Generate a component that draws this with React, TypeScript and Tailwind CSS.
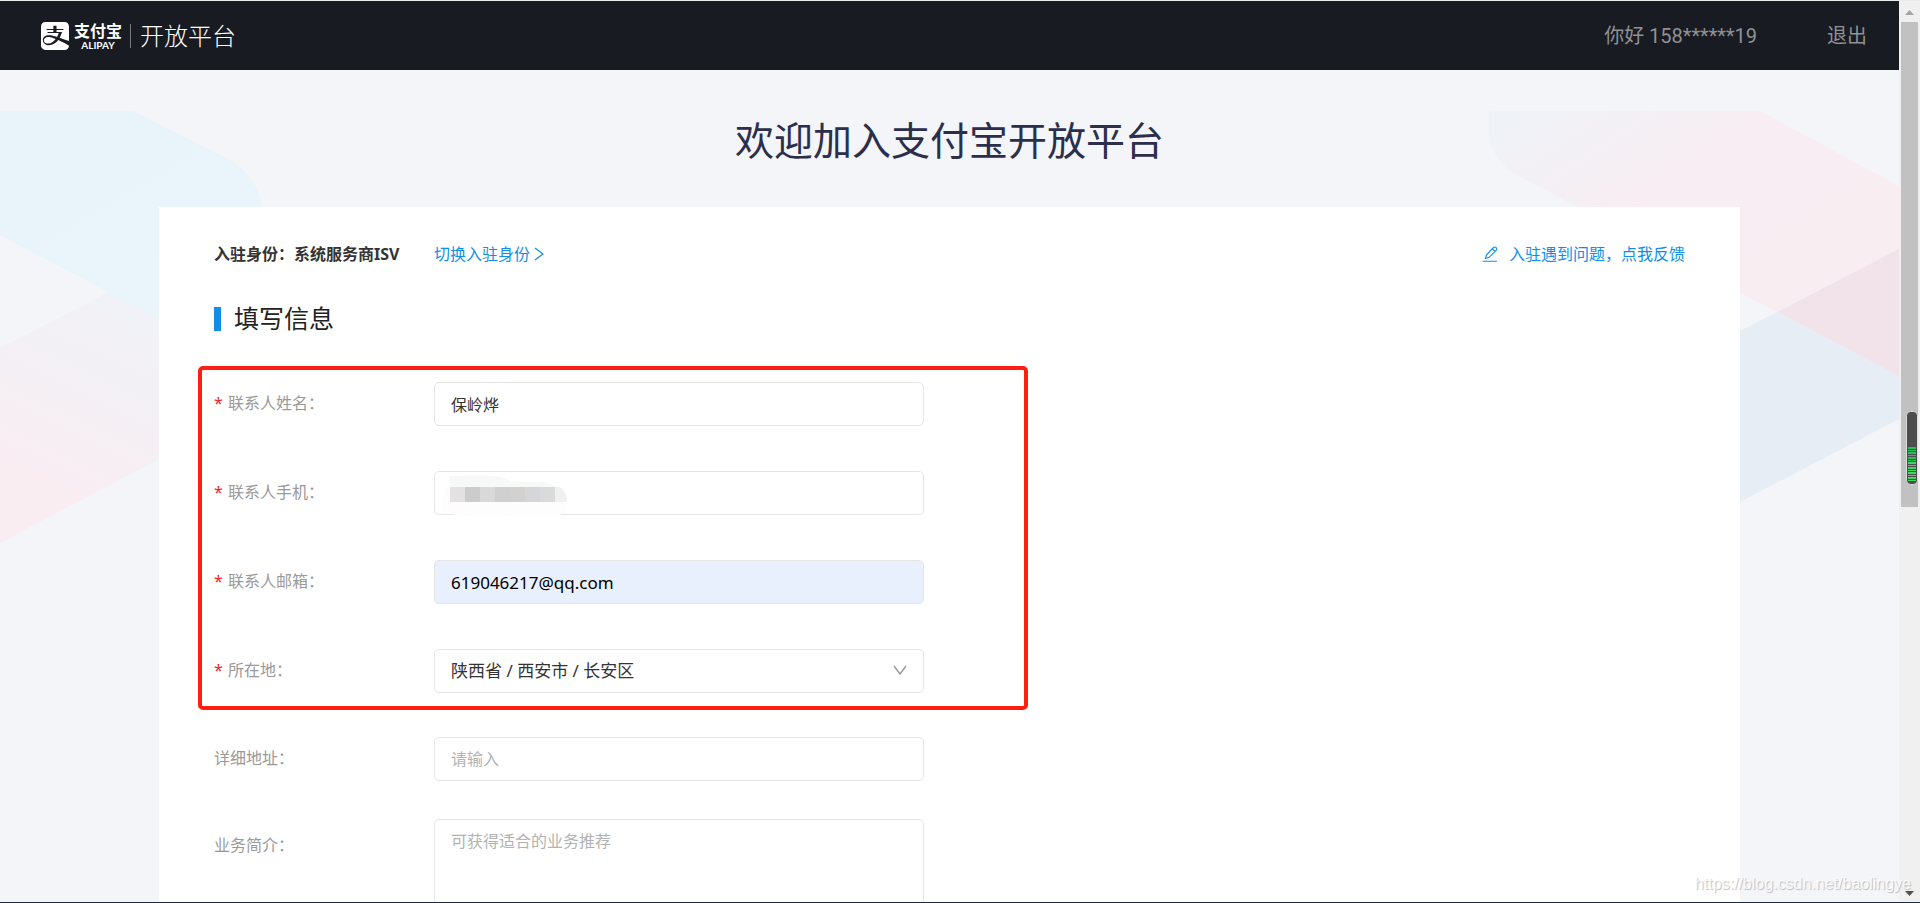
import React, { useState } from 'react';
import { FaAlipay } from 'react-icons/fa';

type FieldRowProps = {
    id: string;
    label: string;
    required?: boolean;
    children: React.ReactNode;
};

const boxClass = 'h-11 w-full rounded-[5px] border border-[#e5e5e5] px-4 focus:border-[#108ee9] focus:outline-none';

const FieldRow = ({ id, label, required, children }: FieldRowProps) => (
    <div className="flex items-start">
        <label htmlFor={id} className="flex h-[42px] w-[220px] shrink-0 items-center text-[#999]">
            {required && <span className="w-[14px] text-[#f5222d]">*</span>}
            {label}：
        </label>
        <div className="relative w-[490px]">{children}</div>
    </div>
);

const LeftShapes = () => (
    <svg className="absolute left-0 top-[110px]" width="280" height="440" viewBox="0 0 280 440" aria-hidden="true">
        <defs>
            <linearGradient id="leftPink" x1="0.7" y1="0" x2="0.4" y2="1">
                <stop offset="0" stopColor="#f0f2f7" />
                <stop offset="0.5" stopColor="#f5eff4" />
                <stop offset="0.8" stopColor="#f9edf2" />
            </linearGradient>
            <linearGradient id="leftBlue" x1="0" y1="0" x2="0.6" y2="1">
                <stop offset="0" stopColor="#e9f3fa" />
                <stop offset="1" stopColor="#e9f5fb" />
            </linearGradient>
        </defs>
        <path d="M0 237 L113 179 L159 205 V348 L0 432 Z" fill="url(#leftPink)" />
        <path d="M0 0 H133 L232 50 Q258 66 262 97 V257 H172 L159 208 L0 124 Z" fill="url(#leftBlue)" />
    </svg>
);

const RightShapes = () => (
    <svg className="absolute right-0 top-[110px]" width="410" height="400" viewBox="0 0 410 400" aria-hidden="true">
        <defs>
            <linearGradient id="rightPink" x1="0" y1="0" x2="0.6" y2="0.6">
                <stop offset="0" stopColor="#eef3f8" />
                <stop offset="0.6" stopColor="#f8edf2" />
                <stop offset="1" stopColor="#f8eef2" />
            </linearGradient>
        </defs>
        <path d="M0 0 H271 L410 75 V265 L90 97 L26 63 Q0 46 0 20 Z" fill="url(#rightPink)" />
        <path d="M410 138 L251 220 V391 L410 308 Z" fill="#e7edf5" />
        <path d="M410 138 L289 201 L410 265 Z" fill="#f2e3ea" />
    </svg>
);

// Che số điện thoại
const PhoneMask = () => (
    <svg className="absolute left-[4px] top-[2px]" width="132" height="46" viewBox="0 0 132 46" aria-hidden="true">
        <path d="M12 4 Q50 -2 73 8 Q116 8 128 24 V40 Q110 46 60 43 Q14 46 2 36 Z" fill="#fdfdfd" />
        <path d="M12 3 H56 Q70 5 73 9 H105 Q117 11 117 14 H12 Z" fill="#f7f8f8" />
        <rect x="12" y="14" width="15" height="15" fill="#e3e1e2" />
        <rect x="27" y="14" width="15" height="15" fill="#cbcccb" />
        <rect x="42" y="14" width="15" height="15" fill="#d9d9da" />
        <rect x="57" y="14" width="15" height="15" fill="#d0d0d0" />
        <rect x="72" y="14" width="15" height="15" fill="#d3d1d0" />
        <rect x="87" y="14" width="15" height="15" fill="#d4d6da" />
        <rect x="102" y="14" width="15" height="15" fill="#dadada" />
        <path d="M117 14 H122 Q129 20 129 29 H117 Z" fill="#eff0f2" />
    </svg>
);

const ScrollBar = () => (
    <div className="relative flex w-[21px] shrink-0 flex-col items-center justify-between bg-[#f0f0f0]" aria-hidden="true">
        <svg className="mt-[9px]" width="9" height="5" viewBox="0 0 9 5">
            <path d="M0 5 L4.500 0 L9 5 Z" fill="#a3a3a3" />
        </svg>
        <svg className="mb-[6px]" width="9" height="5" viewBox="0 0 9 5">
            <path d="M0 0 L4.500 5 L9 0 Z" fill="#505050" />
        </svg>
        <div className="absolute left-[2px] top-[21px] h-[485px] w-[17px] bg-[#c1c1c1]" />
        <svg className="absolute right-[2px] top-[410px]" width="12" height="75" viewBox="0 0 12 75">
            <rect x="0.5" y="0.5" width="11" height="73" rx="4" fill="#4d4d4d" stroke="#dcdcdc" />
            {[0, 1, 2, 3, 4, 5, 6].map((i) => (
                <g key={i} fill={i < 3 ? '#22c05c' : '#3fd65f'}>
                    <rect x="2" y={36 + i * 5} width="8" height="2" />
                    <rect x="2" y={39 + i * 5} width="8" height="1" />
                </g>
            ))}
        </svg>
    </div>
);

const App = () => {
    const [name, setName] = useState('保岭烨');
    const [phone, setPhone] = useState('');
    const [email, setEmail] = useState('619046217@qq.com');
    const [region, setRegion] = useState('陕西省 / 西安市 / 长安区');

    return (
        <div className="flex h-screen flex-col overflow-hidden border-b border-t border-b-[#1f2a3a] border-t-[#e9ebea] font-['Noto_Sans','Noto_Sans_CJK_SC',sans-serif] text-base">
            <div className="flex min-h-0 flex-1">
                <div className="relative min-w-0 flex-1 overflow-hidden bg-[#f3f5f9]">
                    <LeftShapes />
                    <RightShapes />

                    {/* Header */}
                    <header className="relative flex h-[69px] items-center justify-between bg-[#181b22] pl-[41px] pr-8">
                        <a href="#" className="flex items-center text-white">
                            <FaAlipay className="h-8 w-7" />
                            <span className="ml-[5px] flex flex-col">
                                <span className="text-base leading-[18px] font-bold">支付宝</span>
                                <span className="text-center font-['Lato',sans-serif] text-[10px] leading-[10px] font-bold">ALIPAY</span>
                            </span>
                            <span className="ml-2 mr-[9px] h-6 w-px bg-[#777a80]" />
                            <span className="text-2xl font-light">开放平台</span>
                        </a>
                        <nav className="flex items-center gap-[70px] font-['Roboto','Noto_Sans_CJK_SC',sans-serif] text-xl text-[#8f9195]">
                            <span>你好 158******19</span>
                            <a href="#">退出</a>
                        </nav>
                    </header>

                    <h1 className="relative mt-[42px] text-center text-[39px] leading-[56px] text-[#2b2f4c]">
                        欢迎加入支付宝开放平台
                    </h1>

                    {/* Form */}
                    <main className="relative mx-[159px] mt-[39px] bg-white px-[55px] pt-[35px]">
                        <div className="flex h-6 items-center">
                            <p className="w-[220px] font-bold text-[#333]">入驻身份：系统服务商ISV</p>
                            <a href="#" className="flex items-center gap-1 text-[#108ee9]">
                                切换入驻身份
                                <svg width="10" height="14" viewBox="0 0 10 14" fill="none" stroke="currentColor" strokeWidth="1.300">
                                    <path d="M1 1 L9 7 L1 13" />
                                </svg>
                            </a>
                            <a href="#" className="ml-auto flex items-center gap-[11px] text-[#108ee9]">
                                <svg width="16" height="16" viewBox="0 0 16 16" fill="none" stroke="currentColor" strokeWidth="1.100">
                                    <path d="M3.500 12.500 L4.500 8.800 L11.500 1.500 Q13 0.500 14.200 1.600 Q15.300 3 14.300 4.200 L7.200 11.300 Z M10.300 2.800 L13 5.500 M0.500 15.300 H15" />
                                </svg>
                                入驻遇到问题，点我反馈
                            </a>
                        </div>

                        <h2 className="mt-[35px] flex h-9 items-center gap-[13px] text-[25px] text-[#222]">
                            <span className="h-6 w-[7px] bg-[#108ee9]" />
                            填写信息
                        </h2>

                        <form>
                            <div className="-ml-4 mt-[29px] flex w-[830px] flex-col gap-[45px] rounded-[5px] border-4 border-[#ff1f12] pb-[13px] pl-3 pt-3">
                                <FieldRow id="name" label="联系人姓名" required>
                                    <input id="name" type="text" className={`${boxClass} text-[#333]`} value={name} onChange={(e) => setName(e.target.value)} />
                                </FieldRow>
                                <FieldRow id="phone" label="联系人手机" required>
                                    <input id="phone" type="tel" className={`${boxClass} text-[#333]`} value={phone} onChange={(e) => setPhone(e.target.value)} />
                                    <PhoneMask />
                                </FieldRow>
                                <FieldRow id="email" label="联系人邮箱" required>
                                    <input
                                        id="email"
                                        type="email"
                                        className={`${boxClass} bg-[#e8f0fe] text-[17px] text-black`}
                                        value={email}
                                        onChange={(e) => setEmail(e.target.value)}
                                    />
                                </FieldRow>
                                <FieldRow id="region" label="所在地" required>
                                    <select
                                        id="region"
                                        className={`${boxClass} appearance-none bg-white text-[17px] text-[#333]`}
                                        value={region}
                                        onChange={(e) => setRegion(e.target.value)}
                                    >
                                        <option>陕西省 / 西安市 / 长安区</option>
                                    </select>
                                    <svg className="pointer-events-none absolute right-[17px] top-4" width="14" height="10" viewBox="0 0 14 10" fill="none" stroke="#999" strokeWidth="1.400">
                                        <path d="M1 1 L7 9 L13 1" />
                                    </svg>
                                </FieldRow>
                            </div>

                            <div className="mt-[27px] flex flex-col gap-[38px]">
                                <FieldRow id="address" label="详细地址">
                                    <input id="address" type="text" placeholder="请输入" className={`${boxClass} text-[#333] placeholder:text-[#b2b2b2]`} />
                                </FieldRow>
                                <div className="flex items-start">
                                    <label htmlFor="intro" className="w-[220px] shrink-0 pt-[14px] text-[#999]">
                                        业务简介：
                                    </label>
                                    <textarea
                                        id="intro"
                                        placeholder="可获得适合的业务推荐"
                                        className="h-[130px] w-[490px] resize-none rounded-[5px] border border-[#e5e5e5] px-4 py-[9px] text-[#333] placeholder:text-[#b2b2b2] focus:outline-none"
                                    />
                                </div>
                            </div>
                        </form>
                    </main>
                </div>
                <ScrollBar />
            </div>

            <span className="absolute bottom-[7px] right-[9px] font-['Liberation_Sans',sans-serif] text-base text-white/80 [text-shadow:1px_1px_1px_#bbb]">
                https://blog.csdn.net/baolingye
            </span>
        </div>
    );
};

export default App;
